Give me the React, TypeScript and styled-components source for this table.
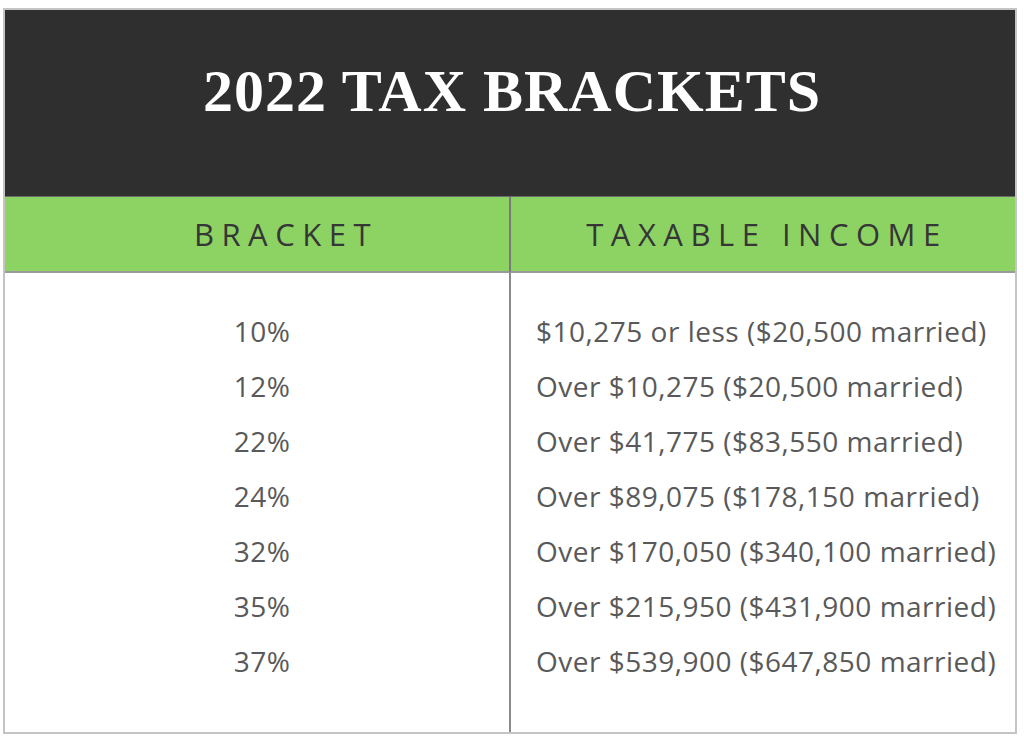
import styled, { createGlobalStyle } from 'styled-components';

const GlobalStyle = createGlobalStyle`
  html, body {
    margin: 0;
    padding: 0;
    background: #ffffff;
  }
`;

const Page = styled.div`
  width: 1024px;
  height: 738px;
  padding: 8px 7px 4px 3px;
  box-sizing: border-box;
`;

const Frame = styled.div`
  border: 2px solid #c4c4c4;
  display: flex;
  flex-direction: column;
  height: 100%;
  box-sizing: border-box;
`;

const Banner = styled.header`
  height: 187px;
  background-color: #2f2f2f;
  display: flex;
  justify-content: center;
  align-items: center;
  padding-bottom: 24px;
  box-sizing: border-box;
  border-bottom: 1px solid #6b6b6b;
`;

const Title = styled.h1`
  margin: 0;
  padding-left: 4px;
  color: #ffffff;
  font-family: 'Liberation Serif', 'DejaVu Serif', serif;
  font-weight: 700;
  font-size: 60px;
  letter-spacing: 1px;
`;

const Columns = styled.div`
  display: grid;
  grid-template-columns: 504px 1fr;
`;

const HeadCell = styled.div<{ $first?: boolean }>`
  height: 76px;
  box-sizing: border-box;
  background-color: #8dd364;
  display: flex;
  justify-content: center;
  align-items: center;
  border-left: ${(p) => (p.$first ? 'none' : '2px solid #7a7a7a')};
  border-bottom: 2px solid #9a9a9a;
  font-family: 'Open Sans', 'Liberation Sans', sans-serif;
  font-size: 31px;
  letter-spacing: 7.5px;
  color: #363636;
  padding-left: ${(p) => (p.$first ? '58px' : '8px')};
`;

const Body = styled.div`
  flex: 1;
  display: grid;
  grid-template-columns: 504px 1fr;
`;

const Column = styled.div<{ $first?: boolean }>`
  display: flex;
  flex-direction: column;
  align-items: ${(p) => (p.$first ? 'center' : 'flex-start')};
  padding: 31px 0 0 ${(p) => (p.$first ? '10px' : '25px')};
  border-left: ${(p) => (p.$first ? 'none' : '2px solid #8a8a8a')};
`;

const Cell = styled.div`
  height: 55px;
  line-height: 55px;
  font-family: 'Open Sans', 'Liberation Sans', sans-serif;
  font-size: 28px;
  letter-spacing: 0.5px;
  color: #595959;
  white-space: nowrap;
`;

const rows = [
  ['10%', '$10,275 or less ($20,500 married)'],
  ['12%', 'Over $10,275 ($20,500 married)'],
  ['22%', 'Over $41,775 ($83,550 married)'],
  ['24%', 'Over $89,075 ($178,150 married)'],
  ['32%', 'Over $170,050 ($340,100 married)'],
  ['35%', 'Over $215,950 ($431,900 married)'],
  ['37%', 'Over $539,900 ($647,850 married)'],
];

function App() {
  return (
    <Page>
      <GlobalStyle />
      <Frame>
        <Banner>
          <Title>2022 TAX BRACKETS</Title>
        </Banner>
        <Columns>
          <HeadCell $first>BRACKET</HeadCell>
          <HeadCell>TAXABLE INCOME</HeadCell>
        </Columns>
        <Body>
          <Column $first>
            {rows.map((r) => (
              <Cell key={r[0]}>{r[0]}</Cell>
            ))}
          </Column>
          <Column>
            {rows.map((r) => (
              <Cell key={r[0]}>{r[1]}</Cell>
            ))}
          </Column>
        </Body>
      </Frame>
    </Page>
  );
}

export default App;
